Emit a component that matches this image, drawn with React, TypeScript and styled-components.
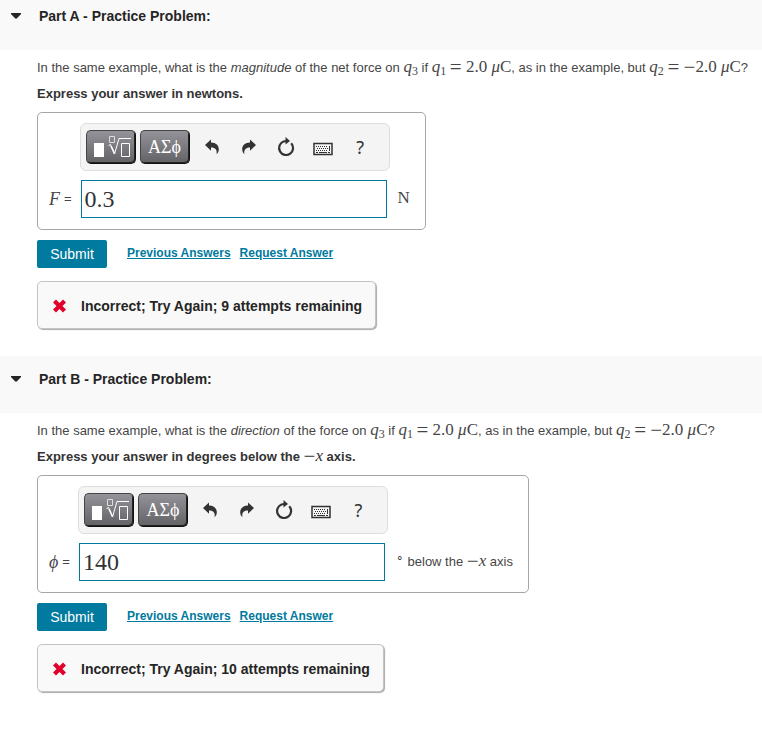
import React, { useState } from "react";
import styled, { createGlobalStyle } from "styled-components";

const GlobalStyle = createGlobalStyle`
  *, *::before, *::after { box-sizing: border-box; }
  body {
    margin: 0;
    background: #fff;
    color: #464646;
    font: 13px/18px "Liberation Sans", Arial, sans-serif;
  }
`;

const Part = styled.section`
  margin-bottom: 27px;
`;

const PartHeader = styled.header<{ $first?: boolean }>`
  display: flex;
  align-items: center;
  padding: ${(p) => (p.$first ? "7px" : "14px")} 11px 25px;
  background: #f9f9f9;
`;

const Toggle = styled.button`
  display: flex;
  align-items: center;
  width: 28px;
  height: 18px;
  padding: 0;
  border: 0;
  background: none;
  cursor: pointer;
`;

const PartTitle = styled.h2`
  margin: 0;
  color: #252525;
  font-size: 14px;
  line-height: 18px;
`;

const PartBody = styled.div`
  display: flex;
  flex-direction: column;
  align-items: flex-start;
  padding: 8px 0 0 37px;
`;

const Question = styled.p`
  margin: 0;
  line-height: 20px;
  white-space: nowrap;
`;

const Instruction = styled.p`
  margin: 6px 0 9px;
  color: #333;
  font-weight: bold;
  line-height: 19px;
`;

const MathText = styled.span`
  font-family: "Liberation Serif", "Times New Roman", serif;
  font-size: 17px;
  font-weight: normal;
  line-height: 1px;

  sub {
    font-size: 12px;
    line-height: 1px;
    vertical-align: -3px;
  }
`;

const Operator = styled.span`
  font-size: 21px;
  line-height: 1px;
  vertical-align: -2px;
`;

const AnswerBox = styled.div`
  display: grid;
  grid-template-columns: auto minmax(0, 306px) auto;
  align-items: center;
  row-gap: 9px;
  padding: 10px 15px 11px 11px;
  border: 1px solid #a6a6a6;
  border-radius: 5px;
`;

const Toolbar = styled.div`
  grid-column: 2;
  display: flex;
  align-items: center;
  width: 310px;
  height: 48px;
  margin-left: -1px;
  padding: 0 5px;
  border: 1px solid #dedede;
  border-radius: 6px;
  background: #f4f4f4;
`;

const PaletteButton = styled.button`
  display: flex;
  align-items: center;
  justify-content: center;
  width: 50px;
  height: 34px;
  margin-right: 4px;
  padding: 0;
  border: 1px solid #111;
  border-top-color: #444;
  border-left-color: #444;
  border-radius: 5px;
  background: linear-gradient(#94939a, #626164);
  box-shadow: inset -1px -1px #222;
  color: #fff;
  font: 18px/24px "Liberation Serif", "Times New Roman", serif;
  cursor: pointer;
`;

const ToolButton = styled.button`
  display: flex;
  align-items: center;
  justify-content: center;
  width: 37px;
  height: 34px;
  padding: 0;
  border: 0;
  background: none;
  color: #333;
  font: 18px/24px "Noto Sans", sans-serif;
  cursor: pointer;
`;

const AnswerLabel = styled.label`
  grid-column: 1;
  display: flex;
  align-items: center;
  gap: 4px;
  padding-right: 9px;
`;

const Variable = styled.i`
  font: italic 18px/20px "Liberation Serif", "Times New Roman", serif;
`;

const AnswerInput = styled.input`
  width: 100%;
  height: 38px;
  padding: 0 3px;
  border: 1px solid #0079a0;
  border-radius: 0;
  outline: none;
  background: #fff;
  color: #333;
  font: 24px/34px "Liberation Serif", "Times New Roman", serif;
`;

const Unit = styled.span`
  padding-left: 11px;
  white-space: nowrap;
`;

const Degree = styled.sup`
  font: 12px/1px "Liberation Serif", serif;
  vertical-align: 4px;
`;

const Actions = styled.div`
  display: flex;
  align-items: center;
  margin: 10px 0 13px;
`;

const SubmitButton = styled.button`
  width: 70px;
  height: 28px;
  margin-right: 20px;
  padding: 0;
  border: 0;
  border-radius: 2px;
  background: #007a9e;
  color: #fff;
  font: 14px/18px "Liberation Sans", Arial, sans-serif;
  cursor: pointer;
`;

const ActionLink = styled.a`
  margin-right: 9px;
  padding-bottom: 2px;
  color: #007a9e;
  font-size: 12px;
  font-weight: bold;
`;

const Feedback = styled.div`
  display: flex;
  align-items: center;
  height: 48px;
  padding: 1px 13px 0 14px;
  border: 1px solid #c4c4c4;
  border-radius: 5px;
  background: #f9f9f9;
  box-shadow: 1px 1px 1px #aaa;
  color: #252525;
  font-size: 14px;
  font-weight: bold;

  svg { margin-right: 14px; }
`;

function ToggleIcon({ open }: { open: boolean }) {
  return (
    <svg width="10" height="6" viewBox="0 0 10 6" transform={open ? undefined : "rotate(-90)"} aria-hidden="true">
      <path d="M0 0h10v1L5.8 5.6H4.2L0 1z" fill="#252525" />
    </svg>
  );
}

function TemplateIcon() {
  return (
    <svg width="40" height="26" viewBox="0 0 40 26" fill="none" stroke="#fff" aria-hidden="true">
      <path d="M3 9h10v14H3z" fill="#fff" stroke="none" />
      <path d="M18.5 2.5h5v6h-5z" stroke="#ddd" />
      <path d="M17.500 11.500l2-1 4 9.500L28 4.500H40" />
      <path d="M20 12l3.500 7.500" strokeWidth="1.600" />
      <path d="M30.500 9.500h8v13h-8z" />
    </svg>
  );
}

function ArrowIcon({ flip }: { flip?: boolean }) {
  return (
    <svg width="14" height="16" viewBox="0 0 14 16" aria-hidden="true">
      <path
        transform={flip ? "translate(14 0) scale(-1 1)" : undefined}
        d="M0 6L6 .5v3C11 3.500 14 6.500 13.800 10.500c0 2-1 3.500-2.200 4.800C12.300 11 10.500 8.600 6 8.600v3.200z"
        fill="#333"
      />
    </svg>
  );
}

function ResetIcon() {
  return (
    <svg width="18" height="20" viewBox="0 0 18 20" aria-hidden="true">
      <path d="M14.200 6.200A7 7 0 1 1 6.500 4.500L9.500 4" fill="none" stroke="#333" strokeWidth="2.200" />
      <path d="M8.500 0l4.500 4-4.500 3.500z" fill="#333" />
    </svg>
  );
}

function KeyboardIcon() {
  return (
    <svg width="20" height="18" viewBox="0 -4 20 18" fill="none" stroke="#333" aria-hidden="true">
      <path d="M1 1.500h18v11H1z" strokeWidth="1.500" />
      <path d="M3 4.500h12M4 6.500h11M3 8.500h12" strokeDasharray="1 1" />
      <path d="M6 10.500h8M3 10.500h2M15 10.500h2M16.500 4v5" />
    </svg>
  );
}

function CrossIcon() {
  return (
    <svg width="15" height="14" viewBox="0 0 15 14" aria-hidden="true">
      <path d="M2.500 2l10 10M12.500 2l-10 10" stroke="#e0002b" strokeWidth="4.200" />
    </svg>
  );
}

const Quantity = ({ index }: { index: number }) => (
  <MathText><i>q</i><sub>{index}</sub></MathText>
);

const Charge = ({ value }: { value: string }) => (
  <MathText><Operator>=</Operator> {value.startsWith("−") && <Operator>−</Operator>}{value.replace("−", "")} <i>μ</i>C</MathText>
);

const MinusX = () => <MathText><Operator>−</Operator><i>x</i></MathText>;

interface PracticePartProps {
  id: string;
  first?: boolean;
  asked: string;
  force: string;
  instruction: React.ReactNode;
  symbol: string;
  answer: string;
  unit: React.ReactNode;
  attempts: number;
}

function PracticePart(props: PracticePartProps) {
  const { id, first, asked, force, instruction, symbol, answer, unit, attempts } = props;
  const [open, setOpen] = useState(true);
  const [value, setValue] = useState(answer);
  const inputId = `answer-${id}`;
  return (
    <Part>
      <PartHeader $first={first}>
        <Toggle aria-label={`Toggle part ${id}`} aria-expanded={open} onClick={() => setOpen(!open)}>
          <ToggleIcon open={open} />
        </Toggle>
        <PartTitle>Part {id} - Practice Problem:</PartTitle>
      </PartHeader>
      {open && (
        <PartBody>
          <Question>
            In the same example, what is the <i>{asked}</i> of the {force} on <Quantity index={3} /> if{" "}
            <Quantity index={1} /> <Charge value="2.0" />, as in the example, but{" "}
            <Quantity index={2} /> <Charge value="−2.0" />?
          </Question>
          <Instruction>{instruction}</Instruction>
          <AnswerBox>
            <Toolbar role="toolbar" aria-label="Equation tools">
              <PaletteButton aria-label="Templates"><TemplateIcon /></PaletteButton>
              <PaletteButton aria-label="Symbols">ΑΣϕ</PaletteButton>
              <ToolButton aria-label="Undo"><ArrowIcon /></ToolButton>
              <ToolButton aria-label="Redo"><ArrowIcon flip /></ToolButton>
              <ToolButton aria-label="Reset"><ResetIcon /></ToolButton>
              <ToolButton aria-label="Keyboard shortcuts"><KeyboardIcon /></ToolButton>
              <ToolButton aria-label="Help">?</ToolButton>
            </Toolbar>
            <AnswerLabel htmlFor={inputId}><Variable>{symbol}</Variable><span>=</span></AnswerLabel>
            <AnswerInput id={inputId} value={value} onChange={(e) => setValue(e.target.value)} />
            <Unit>{unit}</Unit>
          </AnswerBox>
          <Actions>
            <SubmitButton>Submit</SubmitButton>
            <ActionLink href="#previous">Previous Answers</ActionLink>
            <ActionLink href="#request">Request Answer</ActionLink>
          </Actions>
          <Feedback role="status">
            <CrossIcon />
            Incorrect; Try Again; {attempts} attempts remaining
          </Feedback>
        </PartBody>
      )}
    </Part>
  );
}

export default function App() {
  return (
    <main>
      <GlobalStyle />
      <PracticePart
        id="A"
        first
        asked="magnitude"
        force="net force"
        instruction="Express your answer in newtons."
        symbol="F"
        answer="0.3"
        unit={<MathText>N</MathText>}
        attempts={9}
      />
      <PracticePart
        id="B"
        asked="direction"
        force="force"
        instruction={<>Express your answer in degrees below the <MinusX /> axis.</>}
        symbol="ϕ"
        answer="140"
        unit={<><Degree>∘</Degree> below the <MinusX /> axis</>}
        attempts={10}
      />
    </main>
  );
}
